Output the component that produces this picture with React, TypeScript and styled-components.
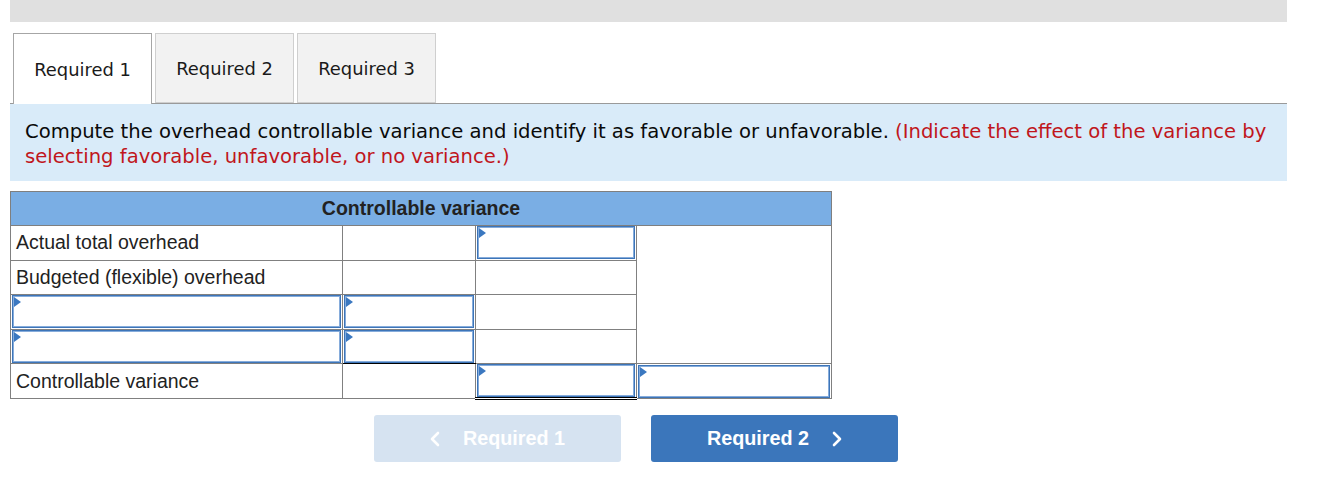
import React from "react";
import styled, { createGlobalStyle } from "styled-components";

const Global = createGlobalStyle`
  html, body { margin: 0; padding: 0; background: #fff; }
  body { font-family: "DejaVu Sans", Verdana, sans-serif; }
  * { box-sizing: border-box; }
`;

const Page = styled.div`
  width: 1287px;
  padding-left: 10px;
`;

const TopBar = styled.div`
  height: 22px;
  background: #e0e0e0;
`;

const TabList = styled.div`
  display: flex;
  align-items: flex-start;
  gap: 3px;
  margin-top: 11px;
  padding-left: 3px;
  position: relative;
  z-index: 1;
`;

const Tab = styled.div<{ $active?: boolean }>`
  width: 139px;
  height: ${(p) => (p.$active ? "71px" : "70px")};
  margin-bottom: ${(p) => (p.$active ? "-1px" : "0")};
  display: flex;
  align-items: center;
  justify-content: center;
  font-family: "DejaVu Sans", Verdana, sans-serif;
  font-size: 17.9px;
  color: #1a1a1a;
  background: ${(p) => (p.$active ? "#fff" : "#f2f2f2")};
  border: 1px solid ${(p) => (p.$active ? "#a6a6a6" : "#cfcfcf")};
  border-bottom: ${(p) => (p.$active ? "none" : "1px solid #cfcfcf")};
  padding-top: 1px;
`;

const Instructions = styled.div`
  background: #d9ebf9;
  border-top: 1px solid #9a9a9a;
  height: 78px;
  padding: 15px 15px 0 15px;
  font-family: "DejaVu Sans", Verdana, sans-serif;
  font-size: 19.6px;
  line-height: 25px;
  color: #0a0a0a;
`;

const Red = styled.span`
  color: #c0161c;
`;

const Table = styled.table`
  margin-top: 10px;
  border-collapse: collapse;
  width: 821px;
  table-layout: fixed;
  font-family: "Liberation Sans", Arial, sans-serif;
  font-size: 19.5px;
  color: #222;
`;

const HeadCell = styled.th`
  background: #7aaee4;
  border: 1px solid #7f7f7f;
  height: 34px;
  font-weight: bold;
  text-align: center;
  padding: 0;
  color: #222;
`;

const Cell = styled.td<{ $under?: "single" | "double" }>`
  border: 1px solid #808080;
  height: 34.5px;
  padding: 0;
  vertical-align: middle;
  ${(p) => p.$under === "single" && "border-bottom: 1px solid #000;"}
  ${(p) => p.$under === "double" && "border-bottom: 3px double #000;"}
`;

const Label = styled(Cell)`
  padding-left: 5px;
  white-space: nowrap;
`;

const InputBox = styled.div`
  position: relative;
  height: 33px;
  margin: 0 1px;
  border: 1px solid #3d75b8;
  box-shadow: inset 0 0 0 1px #86acdb;
  background: #fff;
`;

const Marker = styled.span`
  position: absolute;
  top: 1px;
  left: 1px;
  width: 0;
  height: 0;
  border-top: 5.5px solid transparent;
  border-bottom: 5.5px solid transparent;
  border-left: 7px solid #3b78c0;
`;

const Input = () => (
  <InputBox>
    <Marker />
  </InputBox>
);

const Nav = styled.div`
  display: flex;
  gap: 30px;
  margin-top: 15px;
  margin-left: 364px;
`;

const NavButton = styled.button<{ $disabled?: boolean }>`
  width: 247px;
  height: 47px;
  border: none;
  border-radius: 3px;
  background: ${(p) => (p.$disabled ? "#d6e3f1" : "#3b76bb")};
  color: #fff;
  font-family: "Liberation Sans", Arial, sans-serif;
  font-weight: bold;
  font-size: 19.8px;
  display: flex;
  align-items: center;
  justify-content: center;
  gap: 23px;
  padding: 0;
  cursor: pointer;
`;

const Chevron = ({ dir }: { dir: "left" | "right" }) => (
  <svg width="10" height="16" viewBox="0 0 10 16">
    <path
      d={dir === "left" ? "M8 2 L2 8 L8 14" : "M2 2 L8 8 L2 14"}
      fill="none"
      stroke="#fff"
      strokeWidth="2.6"
      strokeLinecap="round"
      strokeLinejoin="round"
    />
  </svg>
);

export default function App() {
  return (
    <>
      <Global />
      <Page>
        <TopBar />
        <TabList>
          <Tab $active>Required 1</Tab>
          <Tab>Required 2</Tab>
          <Tab>Required 3</Tab>
        </TabList>
        <Instructions>
          Compute the overhead controllable variance and identify it as favorable or unfavorable.{" "}
          <Red>(Indicate the effect of the variance by selecting favorable, unfavorable, or no variance.)</Red>
        </Instructions>
        <Table>
          <colgroup>
            <col style={{ width: 332 }} />
            <col style={{ width: 133 }} />
            <col style={{ width: 161 }} />
            <col style={{ width: 195 }} />
          </colgroup>
          <thead>
            <tr>
              <HeadCell colSpan={4}>Controllable variance</HeadCell>
            </tr>
          </thead>
          <tbody>
            <tr>
              <Label>Actual total overhead</Label>
              <Cell />
              <Cell>
                <Input />
              </Cell>
              <Cell rowSpan={4} />
            </tr>
            <tr>
              <Label>Budgeted (flexible) overhead</Label>
              <Cell />
              <Cell />
            </tr>
            <tr>
              <Cell>
                <Input />
              </Cell>
              <Cell>
                <Input />
              </Cell>
              <Cell />
            </tr>
            <tr>
              <Cell>
                <Input />
              </Cell>
              <Cell $under="single">
                <Input />
              </Cell>
              <Cell />
            </tr>
            <tr>
              <Label>Controllable variance</Label>
              <Cell />
              <Cell $under="double">
                <Input />
              </Cell>
              <Cell>
                <Input />
              </Cell>
            </tr>
          </tbody>
        </Table>
        <Nav>
          <NavButton $disabled>
            <Chevron dir="left" />
            <span>Required 1</span>
          </NavButton>
          <NavButton>
            <span>Required 2</span>
            <Chevron dir="right" />
          </NavButton>
        </Nav>
      </Page>
    </>
  );
}
